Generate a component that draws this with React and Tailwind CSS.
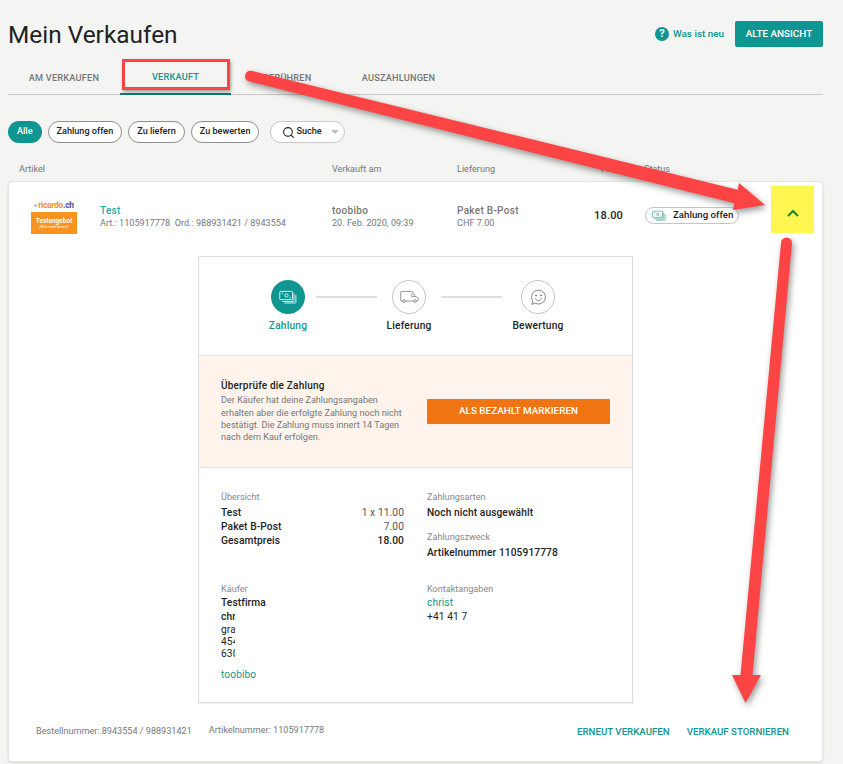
import React from 'react';
import { Search } from 'lucide-react';

function MoneyIcon({ className }) {
  return (
    <svg viewBox="0 0 24 18" fill="none" stroke="currentColor" strokeWidth="1.1" className={className}>
      <rect x="1" y="1.5" width="17" height="11" rx="1" />
      <circle cx="10" cy="7" r="2.2" />
      <path d="M3.5 4h2M14 10h2" />
      <path d="M20 4v10.2a.8.8 0 0 1-.8.8H4" />
      <path d="M22.5 6.5v9.7a.8.8 0 0 1-.8.8H7" />
    </svg>
  );
}

function VanIcon({ className }) {
  return (
    <svg viewBox="0 0 28 20" fill="none" stroke="currentColor" strokeWidth="1" className={className}>
      <path d="M4 16H2a1 1 0 0 1-1-1V3a1 1 0 0 1 1-1h15.5a1 1 0 0 1 .9.5L23 9.5l3.2 1.6a1 1 0 0 1 .6.9V15a1 1 0 0 1-1 1h-2" />
      <path d="M8 16h12" />
      <path d="M17.5 5v4.5H23" />
      <circle cx="6" cy="16" r="2" />
      <circle cx="22" cy="16" r="2" />
    </svg>
  );
}

function SmileIcon({ className }) {
  return (
    <svg viewBox="0 0 22 22" fill="none" stroke="currentColor" strokeWidth="1" className={className}>
      <path d="M11 1.5a9 9 0 1 1-4.6 16.7L2.5 20l1.2-4A9 9 0 0 1 11 1.5z" />
      <circle cx="7.8" cy="8.5" r=".7" fill="currentColor" />
      <circle cx="14.2" cy="8.5" r=".7" fill="currentColor" />
      <path d="M6.8 12c1 2 2.5 3 4.2 3s3.2-1 4.2-3" />
    </svg>
  );
}

function Pill({ children, active }) {
  return (
    <button
      className={
        active
          ? 'h-[22px] px-[9px] rounded-full bg-[#0f9690] text-white text-[9.1px] font-medium'
          : 'h-[22px] px-[8px] rounded-full border border-[#8f8f8f] bg-white text-[#222] text-[9.1px] font-medium'
      }
    >
      {children}
    </button>
  );
}

function Step({ label, active, children }) {
  return (
    <div className="flex flex-col items-center w-[34px] shrink-0">
      <div
        className={
          active
            ? 'w-[34px] h-[34px] rounded-full bg-[#0f9690] text-white flex items-center justify-center'
            : 'w-[34px] h-[34px] rounded-full border border-[#c4c4c4] bg-white text-[#666] flex items-center justify-center'
        }
      >
        {children}
      </div>
      <span className={active ? 'mt-[5px] text-[10.2px] leading-[14px] font-medium tracking-[0.2px] whitespace-nowrap text-[#0f9690]' : 'mt-[5px] text-[10.2px] leading-[14px] font-medium tracking-[0.2px] whitespace-nowrap text-[#222]'}>
        {label}
      </span>
    </div>
  );
}

function Clipped({ children, bold }) {
  return (
    <div className={bold ? 'w-[14px] overflow-hidden whitespace-nowrap font-medium leading-[14px]' : 'w-[14px] overflow-hidden whitespace-nowrap leading-[12px]'}>
      {children}
    </div>
  );
}

export default function App() {
  return (
    <div className="relative w-[843px] h-[764px] overflow-hidden bg-[#f4f4f2] font-['Roboto',sans-serif] text-[#222]">
      <div className="pl-[8px] pr-[20px] pt-[21px]">
        {/* Header */}
        <div className="flex items-center justify-between h-[26px]">
          <h1 className="mt-[2px] text-[24.4px] leading-[26px] font-normal text-[#222]">Mein Verkaufen</h1>
          <div className="flex items-center">
            <span className="w-[14px] h-[14px] rounded-full bg-[#0f9690] text-white text-[11px] font-bold flex items-center justify-center mr-[4px]">?</span>
            <span className="text-[9.9px] font-medium text-[#0f9690] mr-[11px]">Was ist neu</span>
            <button className="w-[88px] h-[26px] rounded-[2px] bg-[#0f9690] text-white text-[9.9px] font-medium">ALTE ANSICHT</button>
          </div>
        </div>

        {/* Tabs */}
        <div className="flex mt-[13px] h-[35px] border-b border-[#c8c8c8]">
          <div className="w-[112px] h-[35px] flex items-center justify-center text-[9.2px] font-medium tracking-[0.2px] text-[#777]">AM VERKAUFEN</div>
          <div className="w-[111px] h-[35px] flex items-center justify-center text-[9.2px] font-medium tracking-[0.2px] text-[#0f9690] border-b-2 border-[#0b7a74]">VERKAUFT</div>
          <div className="w-[112px] h-[35px] flex items-center justify-center text-[9.2px] font-medium tracking-[0.2px] text-[#777]">GEBÜHREN</div>
          <div className="w-[111px] h-[35px] flex items-center justify-center text-[9.2px] font-medium tracking-[0.2px] text-[#777]">AUSZAHLUNGEN</div>
        </div>

        {/* Filter */}
        <div className="flex items-center mt-[26px] gap-[6px]">
          <Pill active>Alle</Pill>
          <Pill>Zahlung offen</Pill>
          <Pill>Zu liefern</Pill>
          <Pill>Zu bewerten</Pill>
          <button className="ml-[5px] w-[75px] h-[22px] rounded-full border border-[#c8c8c8] bg-white flex items-center pl-[11px] text-[9.1px] font-medium text-[#222]">
            <Search size={13} strokeWidth={2} className="text-[#222] mr-[1px]" />
            Suche
            <span className="ml-[9px] w-0 h-0 border-x-[4px] border-x-transparent border-t-[4px] border-t-[#bbb]" />
          </button>
        </div>

        {/* Column heads */}
        <div className="flex mt-[20px] pl-[11px] h-[14px] items-center text-[9.1px] text-[#777]">
          <div className="w-[313px]">Artikel</div>
          <div className="w-[125px]">Verkauft am</div>
          <div className="w-[144px]">Lieferung</div>
          <div className="w-[43px]">Preis</div>
          <div>Status</div>
        </div>

        {/* Card */}
        <div className="mt-[4px] w-[815px] h-[581px] rounded-[4px] bg-white border border-[#e6e6e6] shadow-sm">
          <div className="flex items-center h-[74px] pb-[4px]">
            <div className="ml-[22px] w-[46px] shrink-0 flex flex-col items-center">
              <div className="flex items-center text-[8.5px] leading-[10px] font-bold tracking-[-0.3px] text-[#f5921e] whitespace-nowrap">
                <span className="w-[3px] h-[3px] rounded-full border border-[#9a9ac8] mr-[1px]" />
                ricardo<span className="text-[#4a4fa3]">.ch</span>
              </div>
              <div className="mt-[2px] w-[46px] h-[22px] bg-[#f7931e] text-white flex flex-col items-center justify-center">
                <span className="text-[6.5px] leading-[8px] font-bold">Testangebot</span>
                <span className="text-[3.5px] leading-[5px]">(Bitte nicht bieten!)</span>
              </div>
            </div>
            <div className="ml-[23px] w-[232px] shrink-0">
              <div className="text-[10px] leading-[13px] font-medium tracking-[0.3px] text-[#2aa6a0]">Test</div>
              <div className="text-[9.1px] leading-[13px] text-[#777] whitespace-nowrap">Art.: 1105917778&nbsp; Ord.: 988931421 / 8943554</div>
            </div>
            <div className="w-[125px] shrink-0">
              <div className="text-[10px] leading-[13px] font-medium tracking-[0.3px] text-[#777]">toobibo</div>
              <div className="text-[9.1px] leading-[13px] text-[#777]">20. Feb. 2020, 09:39</div>
            </div>
            <div className="w-[137px] shrink-0">
              <div className="text-[10px] leading-[13px] font-medium tracking-[0.3px] text-[#777]">Paket B-Post</div>
              <div className="text-[9.1px] leading-[13px] text-[#777]">CHF 7.00</div>
            </div>
            <div className="w-[51px] shrink-0 mb-[1px] text-[11px] font-medium tracking-[0.2px] text-[#222]">18.00</div>
            <div className="w-[94px] h-[17px] mb-[3px] shrink-0 rounded-full border border-[#c4c4c4] flex items-center pl-[6px] text-[9.7px] font-medium text-[#222]">
              <MoneyIcon className="w-[14px] h-[11px] text-[#3a9c98] mr-[7px]" />
              <span className="whitespace-nowrap">Zahlung offen</span>
            </div>
          </div>

          {/* Detail panel */}
          <div className="ml-[189px] w-[435px] h-[447px] border border-[#dedede] shadow-[0_1px_1px_rgba(0,0,0,0.06)]">
            <div className="h-[99px] border-b border-[#e4e4e4] pt-[23px] flex items-start pl-[72px]">
              <Step label="Zahlung" active>
                <MoneyIcon className="w-[18px] h-[14px]" />
              </Step>
              <div className="w-[61px] h-[2px] bg-[#dfdfdf] mt-[16px] ml-[11px]" />
              <div className="ml-[15px]">
                <Step label="Lieferung">
                  <VanIcon className="w-[19px] h-[14px]" />
                </Step>
              </div>
              <div className="w-[61px] h-[2px] bg-[#dfdfdf] mt-[16px] ml-[15px]" />
              <div className="ml-[19px]">
                <Step label="Bewertung">
                  <SmileIcon className="w-[17px] h-[17px]" />
                </Step>
              </div>
            </div>

            <div className="h-[112px] bg-[#fef4ec] border-b border-[#e4e4e4] flex items-center pl-[22px]">
              <div className="w-[206px] shrink-0">
                <div className="text-[10px] leading-[14px] font-medium tracking-[0.2px] text-[#222]">Überprüfe die Zahlung</div>
                <p className="mt-[1px] text-[9.1px] leading-[12.3px] text-[#777]">
                  Der Käufer hat deine Zahlungsangaben<br />
                  erhalten aber die erfolgte Zahlung noch nicht<br />
                  bestätigt. Die Zahlung muss innert 14 Tagen<br />
                  nach dem Kauf erfolgen.
                </p>
              </div>
              <button className="w-[183px] h-[25px] shrink-0 rounded-[1px] bg-[#f07412] text-white text-[9.9px] font-medium">ALS BEZAHLT MARKIEREN</button>
            </div>

            <div className="pl-[22px] pt-[22px] flex text-[10.2px] tracking-[0.1px]">
              <div className="w-[183px] shrink-0">
                <div className="text-[9.1px] tracking-normal leading-[14px] text-[#888]">Übersicht</div>
                <div className="mt-[2px] flex justify-between font-medium leading-[14px]"><span>Test</span><span className="font-normal text-[#555]">1 x 11.00</span></div>
                <div className="flex justify-between font-medium leading-[14px]"><span>Paket B-Post</span><span className="font-normal text-[#555]">7.00</span></div>
                <div className="flex justify-between font-medium leading-[14px]"><span>Gesamtpreis</span><span>18.00</span></div>

                <div className="mt-[34px] text-[9.1px] tracking-normal leading-[14px] text-[#888]">Käufer</div>
                <div className="font-medium leading-[14px]">Testfirma</div>
                <Clipped bold>chr</Clipped>
                <Clipped>gra</Clipped>
                <Clipped>454</Clipped>
                <Clipped>630</Clipped>
                <div className="mt-[8px] leading-[14px] text-[#0f9690]">toobibo</div>
              </div>
              <div className="ml-[23px]">
                <div className="text-[9.1px] tracking-normal leading-[14px] text-[#888]">Zahlungsarten</div>
                <div className="mt-[2px] font-medium leading-[14px]">Noch nicht ausgewählt</div>
                <div className="mt-[10px] text-[9.1px] tracking-normal leading-[14px] text-[#888]">Zahlungszweck</div>
                <div className="mt-[2px] font-medium leading-[14px]">Artikelnummer 1105917778</div>

                <div className="mt-[22px] text-[9.1px] tracking-normal leading-[14px] text-[#888]">Kontaktangaben</div>
                <div className="leading-[14px] text-[#0f9690]">christ</div>
                <div className="leading-[14px]">+41 41 7</div>
              </div>
            </div>
          </div>

          {/* Footer */}
          <div className="flex items-center mt-[22px] pl-[27px] pr-[33px] text-[9.1px] text-[#777]">
            <span>Bestellnummer: 8943554 / 988931421</span>
            <span className="ml-[17px] -translate-y-[1px]">Artikelnummer: 1105917778</span>
            <span className="ml-auto text-[9.7px] font-medium text-[#0f9690]">ERNEUT VERKAUFEN</span>
            <span className="ml-[17px] text-[9.7px] font-medium text-[#0f9690]">VERKAUF STORNIEREN</span>
          </div>
        </div>
      </div>

      {/* Annotations drawn over the page */}
      <div className="absolute left-[122px] top-[59px] w-[108px] h-[31px] border-[3px] border-[#fd4444] shadow-[1px_2px_3px_rgba(0,0,0,0.35)]" />
      <div className="absolute left-[771px] top-[186px] w-[43px] h-[47px] bg-[#fff650] flex items-center justify-center pt-[7px]">
        <svg viewBox="0 0 12 8" fill="none" stroke="#12873f" strokeWidth="2" className="w-[12px] h-[8px]">
          <path d="M1 7l5-5 5 5" />
        </svg>
      </div>
      <svg viewBox="0 0 843 764" className="absolute left-0 top-0 w-[843px] h-[764px] pointer-events-none drop-shadow-[2px_3px_3px_rgba(0,0,0,0.4)]">
        <path fill="#fd4444" d="M251.3 70.7L737.7 189.7L739 183L765 205L733 210L734.3 203.3L248.7 81.3A5.5 5.5 0 0 1 251.3 70.7Z" />
        <path fill="#fd4444" d="M781 243L740.5 675L732 675L745.5 703L761 675L752.5 675L792 243A5.5 5.5 0 0 0 781 243Z" />
      </svg>
    </div>
  );
}
